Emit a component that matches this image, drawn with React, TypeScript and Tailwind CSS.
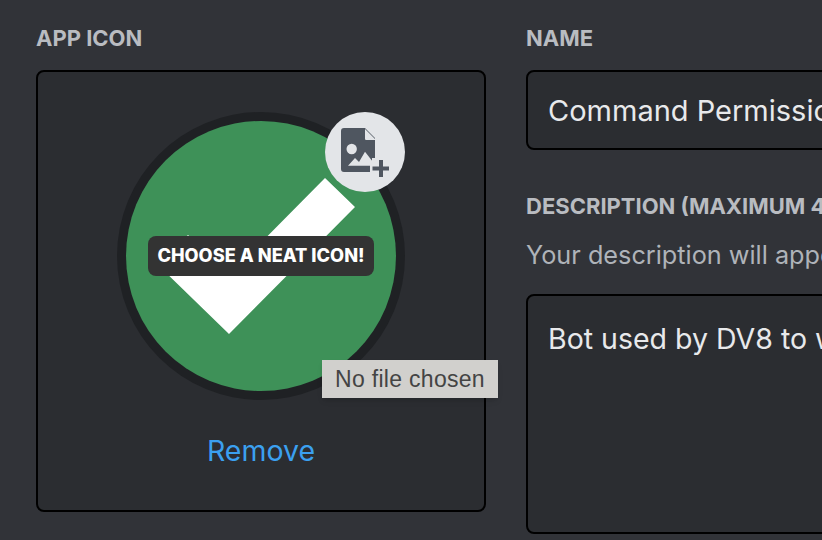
import React from 'react';

const font = "font-['Inter','Liberation_Sans',sans-serif]";

const CheckImage = () => (
  <svg viewBox="0 0 270 270" className="w-full h-full">
    <polygon points="199,57 229,86 103,213 32,144 62,114 103,154" fill="#ffffff" />
  </svg>
);

const AddImageIcon = () => (
  <svg viewBox="0 0 80 80" className="w-20 h-20">
    <path
      d="M19 16 H40 L50 26 V46 H47 V50 H45 V60 H19 C17 60 16 59 16 57 V19 C16 17 17 16 19 16 Z"
      fill="#4f5660"
    />
    <path d="M40 17 L50 27 V28 H41.5 C40.5 28 40 27.5 40 26.5 Z" fill="#e3e5e8" />
    <circle cx="26.7" cy="37" r="5.2" fill="#e3e5e8" />
    <path d="M23 53.7 L30 46 L34 50 L40 39.7 L48 50 L46 53.7 Z" fill="#e3e5e8" />
    <path d="M54 48 H58 V54.5 H64 V58.5 H58 V65 H54 V58.5 H47.5 V54.5 H54 Z" fill="#4f5660" />
  </svg>
);

const Label = ({ children }: { children: React.ReactNode }) => (
  <h3 className="text-[22px] leading-[28px] font-bold uppercase text-[#b9bcc1] whitespace-nowrap">{children}</h3>
);

export default function App() {
  return (
    <div className={`w-[822px] h-[540px] overflow-hidden bg-[#313338] flex gap-10 pl-9 pt-6 ${font}`}>
      <div className="w-[450px] shrink-0">
        <Label>App Icon</Label>
        <div className="mt-[18px] h-[442px] rounded-lg border-2 border-black bg-[#2b2d31] flex flex-col items-center pt-10">
          <div className="relative w-72 h-72 shrink-0 rounded-full bg-[#1f2124] p-[9px]">
            <div className="w-full h-full rounded-full bg-[#3e9158] overflow-hidden">
              <CheckImage />
            </div>
            <div className="absolute left-[208px] top-0 w-20 h-20 rounded-full bg-[#e3e5e8]">
              <AddImageIcon />
            </div>
            <div className="absolute left-[31px] top-[124px] w-[226px] h-10 rounded-lg bg-[#333333] flex items-center justify-center text-white text-[18.2px] font-extrabold whitespace-nowrap">
              CHOOSE A NEAT ICON!
            </div>
            <div className="absolute left-[205px] top-[248px] w-[176px] h-[38px] bg-[#d1d0cd] shadow-md flex items-center justify-center text-[#444444] text-[23px] tracking-[0.3px] font-['Liberation_Sans',sans-serif] whitespace-nowrap">
              No file chosen
            </div>
          </div>
          <span className="mt-[33px] text-[28.5px] leading-9 text-[#3ba0f0]">Remove</span>
        </div>
      </div>
      <div className="w-[400px] shrink-0">
        <Label>Name</Label>
        <div className="mt-[18px] h-20 rounded-lg border-2 border-black bg-[#2b2d31] flex items-center pt-0.5 px-5 text-[29px] text-[#e8e9eb] whitespace-nowrap">
          Command Permissions
        </div>
        <div className="mt-[42px]">
          <Label>Description (maximum 400 characters)</Label>
        </div>
        <p className="mt-5 text-[25.25px] leading-[30px] text-[#afb3b9] whitespace-nowrap">
          Your description will appear in the About Me section
        </p>
        <div className="mt-6 h-[240px] rounded-lg border-2 border-black bg-[#2b2d31] px-5 pt-[25px] text-[28.5px] leading-9 text-[#e8e9eb] whitespace-nowrap">
          Bot used by DV8 to wrangle permissions
        </div>
      </div>
    </div>
  );
}
